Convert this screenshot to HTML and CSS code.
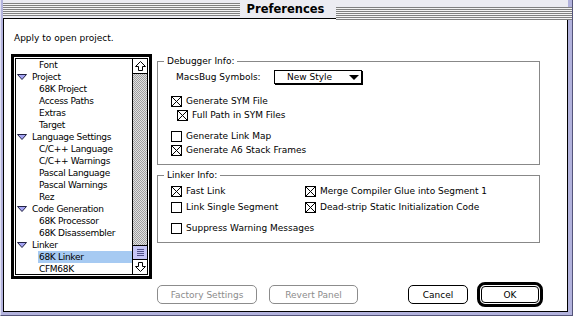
FILE: index.html
```html
<!DOCTYPE html>
<html>
<head>
<meta charset="utf-8">
<title>Preferences</title>
<link rel="stylesheet" href="styles.css">
</head>
<body>
<div class="window">
  <div class="titlebar">
    <div class="stripes left"></div>
    <div class="title">Preferences</div>
    <div class="stripes right"></div>
  </div>
  <div class="content">
    <div class="prompt">Apply to open project.</div>
    <div class="main">
      <div class="listring">
        <div class="list">
          <div class="rows">
            <div class="row child"><span class="lbl">Font</span></div>
            <div class="row parent"><svg class="tri" width="10" height="6" viewBox="0 0 10 6"><path d="M0.5 0.5H9.5L5 5.5Z" fill="#a4a4f4" stroke="#222244" stroke-width="1"/></svg><span class="lbl">Project</span></div>
            <div class="row child"><span class="lbl">68K Project</span></div>
            <div class="row child"><span class="lbl">Access Paths</span></div>
            <div class="row child"><span class="lbl">Extras</span></div>
            <div class="row child"><span class="lbl">Target</span></div>
            <div class="row parent"><svg class="tri" width="10" height="6" viewBox="0 0 10 6"><path d="M0.5 0.5H9.5L5 5.5Z" fill="#a4a4f4" stroke="#222244" stroke-width="1"/></svg><span class="lbl">Language Settings</span></div>
            <div class="row child"><span class="lbl">C/C++ Language</span></div>
            <div class="row child"><span class="lbl">C/C++ Warnings</span></div>
            <div class="row child"><span class="lbl">Pascal Language</span></div>
            <div class="row child"><span class="lbl">Pascal Warnings</span></div>
            <div class="row child"><span class="lbl">Rez</span></div>
            <div class="row parent"><svg class="tri" width="10" height="6" viewBox="0 0 10 6"><path d="M0.5 0.5H9.5L5 5.5Z" fill="#a4a4f4" stroke="#222244" stroke-width="1"/></svg><span class="lbl">Code Generation</span></div>
            <div class="row child"><span class="lbl">68K Processor</span></div>
            <div class="row child"><span class="lbl">68K Disassembler</span></div>
            <div class="row parent"><svg class="tri" width="10" height="6" viewBox="0 0 10 6"><path d="M0.5 0.5H9.5L5 5.5Z" fill="#a4a4f4" stroke="#222244" stroke-width="1"/></svg><span class="lbl">Linker</span></div>
            <div class="row child sel"><span class="lbl">68K Linker</span></div>
            <div class="row child"><span class="lbl">CFM68K</span></div>
          </div>
          <div class="scroll">
            <div class="arrow up"><svg width="11" height="10" viewBox="0 0 11 10"><path d="M5.5 0.5L10.5 5.5H7.5V9.5H3.5V5.5H0.5Z" fill="#fff" stroke="#000"/></svg></div>
            <div class="track"></div>
            <div class="thumb"><span class="grip"></span></div>
            <div class="arrow down"><svg width="11" height="10" viewBox="0 0 11 10"><path d="M5.5 9.5L10.5 4.5H7.5V0.5H3.5V4.5H0.5Z" fill="#fff" stroke="#000"/></svg></div>
          </div>
        </div>
      </div>
      <div class="right">
        <div class="group debugger">
          <span class="legend">Debugger Info:</span>
          <div class="popuprow">
            <span class="plabel">MacsBug Symbols:</span>
            <div class="popup"><span class="ptext">New Style</span><svg width="10" height="5" viewBox="0 0 10 5"><path d="M0 0H10L5 5Z" fill="#000"/></svg></div>
          </div>
          <div class="cb sym"><svg width="11" height="11" viewBox="0 0 11 11"><rect x="0.5" y="0.5" width="10" height="10" fill="#fff" stroke="#000"/><path d="M1 1L10 10M10 1L1 10" stroke="#000"/></svg>Generate SYM File</div>
          <div class="cb full"><svg width="11" height="11" viewBox="0 0 11 11"><rect x="0.5" y="0.5" width="10" height="10" fill="#fff" stroke="#000"/><path d="M1 1L10 10M10 1L1 10" stroke="#000"/></svg>Full Path in SYM Files</div>
          <div class="cb map"><svg width="11" height="11" viewBox="0 0 11 11"><rect x="0.5" y="0.5" width="10" height="10" fill="#fff" stroke="#000"/></svg>Generate Link Map</div>
          <div class="cb a6"><svg width="11" height="11" viewBox="0 0 11 11"><rect x="0.5" y="0.5" width="10" height="10" fill="#fff" stroke="#000"/><path d="M1 1L10 10M10 1L1 10" stroke="#000"/></svg>Generate A6 Stack Frames</div>
        </div>
        <div class="group linker">
          <span class="legend">Linker Info:</span>
          <div class="lgrid">
            <div class="cb"><svg width="11" height="11" viewBox="0 0 11 11"><rect x="0.5" y="0.5" width="10" height="10" fill="#fff" stroke="#000"/><path d="M1 1L10 10M10 1L1 10" stroke="#000"/></svg>Fast Link</div>
            <div class="cb"><svg width="11" height="11" viewBox="0 0 11 11"><rect x="0.5" y="0.5" width="10" height="10" fill="#fff" stroke="#000"/><path d="M1 1L10 10M10 1L1 10" stroke="#000"/></svg>Merge Compiler Glue into Segment 1</div>
            <div class="cb"><svg width="11" height="11" viewBox="0 0 11 11"><rect x="0.5" y="0.5" width="10" height="10" fill="#fff" stroke="#000"/></svg>Link Single Segment</div>
            <div class="cb"><svg width="11" height="11" viewBox="0 0 11 11"><rect x="0.5" y="0.5" width="10" height="10" fill="#fff" stroke="#000"/><path d="M1 1L10 10M10 1L1 10" stroke="#000"/></svg>Dead-strip Static Initialization Code</div>
          </div>
          <div class="cb suppress"><svg width="11" height="11" viewBox="0 0 11 11"><rect x="0.5" y="0.5" width="10" height="10" fill="#fff" stroke="#000"/></svg>Suppress Warning Messages</div>
        </div>
        <div class="buttons">
          <div class="btn dis factory">Factory Settings</div>
          <div class="btn dis revert">Revert Panel</div>
          <div class="btn cancel">Cancel</div>
          <div class="okring"><div class="btn ok">OK</div></div>
        </div>
      </div>
    </div>
  </div>
</div>
</body>
</html>
```

FILE: styles.css
```css
html, body {
  margin: 0;
  padding: 0;
  background: #fff;
  overflow: hidden;
}
body {
  font-family: "DejaVu Sans", "Verdana", sans-serif;
  font-size: 9px;
  line-height: 12px;
  color: #000;
}

.window {
  width: 573px;
  height: 316px;
  box-sizing: border-box;
  background: #b3b3dd;
  border-left: 1px solid #e2e2f4;
  border-right: 1px solid #55557a;
  border-bottom: 1px solid #55557a;
  padding: 0 4px 3px 2px;
  overflow: hidden;
}

.titlebar {
  width: 565px;
  height: 18px;
  display: grid;
  grid-template-columns: 237px 91px 236px;
  background: #ececf2;
}
.stripes {
  height: 13px;
  margin-top: 3px;
  background-color: #f4f4f4;
  background-image: repeating-linear-gradient(to bottom, #808080 0px, #808080 1px, #f4f4f4 1px, #f4f4f4 2px);
}
.title {
  font-weight: bold;
  font-size: 11.5px;
  line-height: 17px;
  padding-top: 1px;
  text-align: center;
  white-space: nowrap;
  overflow: hidden;
}

.content {
  width: 565px;
  height: 294px;
  box-sizing: border-box;
  border: 1px solid #000;
  background: #fff;
  overflow: hidden;
}

.prompt {
  margin: 13px 0 0 10px;
  height: 12px;
}

.main {
  display: flex;
  align-items: flex-start;
  margin-top: 10px;
  padding-left: 7px;
}

.listring {
  flex: none;
  width: 141px;
  height: 225px;
  box-sizing: border-box;
  border: 3px solid #000;
  padding: 1px;
}
.list {
  height: 100%;
  box-sizing: border-box;
  border: 1px solid #000;
  display: flex;
  overflow: hidden;
}
.rows {
  flex: 1;
  min-width: 0;
  overflow: hidden;
  letter-spacing: -0.3px;
}
.row {
  height: 12px;
  line-height: 12px;
  display: flex;
  align-items: center;
  white-space: nowrap;
}
.row.child {
  padding-left: 22px;
}
.row.child .lbl {
  padding-left: 1px;
}
.row.parent {
  padding-left: 1px;
}
.row .lbl {
  flex: 1;
  min-width: 0;
  height: 12px;
  overflow: hidden;
}
.tri {
  flex: none;
  margin-right: 5px;
}
.row.sel .lbl {
  background: #a6caf2;
}

.scroll {
  flex: none;
  width: 15px;
  box-sizing: border-box;
  border-left: 1px solid #000;
  display: flex;
  flex-direction: column;
}
.arrow {
  flex: none;
  height: 15px;
  box-sizing: border-box;
  background: #fff;
  display: flex;
  align-items: center;
  justify-content: center;
}
.arrow.up {
  border-bottom: 1px solid #000;
}
.arrow.down {
  border-top: 1px solid #000;
}
.track {
  flex: 1;
  background: repeating-conic-gradient(#a0a0a0 0 25%, #e2e2e2 0 50%) 0 0 / 2px 2px;
}
.thumb {
  flex: none;
  height: 14px;
  box-sizing: border-box;
  border-top: 1px solid #000;
  background: #c6c6f6;
  display: flex;
  align-items: center;
  justify-content: center;
}
.grip {
  width: 7px;
  height: 7px;
  background: repeating-linear-gradient(to bottom, #505088 0 1px, transparent 1px 2px);
}

.right {
  flex: none;
  width: 386px;
  margin: 7px 0 0 5px;
}
.group {
  position: relative;
  width: 383px;
  box-sizing: border-box;
  border: 1px solid #888;
}
.group.debugger {
  height: 104px;
}
.group.linker {
  height: 68px;
  margin-top: 10px;
}
.legend {
  position: absolute;
  left: 6px;
  top: -7px;
  background: #fff;
  padding: 0 3px;
  line-height: 12px;
  white-space: nowrap;
}

.popuprow {
  display: flex;
  align-items: flex-start;
  height: 15px;
  margin-top: 8px;
}
.plabel {
  flex: none;
  width: 98px;
  margin-left: 18px;
  line-height: 14px;
  white-space: nowrap;
}
.popup {
  flex: none;
  width: 88px;
  height: 14px;
  box-sizing: border-box;
  border: 1px solid #000;
  box-shadow: 1px 1px 0 #000;
  display: flex;
  align-items: center;
}
.ptext {
  margin-left: 12px;
  line-height: 12px;
  white-space: nowrap;
}
.popup svg {
  margin-left: auto;
  margin-right: 2px;
}

.cb {
  display: flex;
  align-items: center;
  height: 11px;
  line-height: 11px;
  white-space: nowrap;
}
.cb svg {
  flex: none;
  margin-right: 4px;
}
.cb.sym {
  margin: 11px 0 0 13px;
}
.cb.full {
  margin: 3px 0 0 19px;
}
.cb.map {
  margin: 10px 0 0 13px;
}
.cb.a6 {
  margin: 3px 0 0 13px;
}

.lgrid {
  display: grid;
  grid-template-columns: 134px auto;
  row-gap: 5px;
  margin: 10px 0 0 13px;
}
.cb.suppress {
  margin: 10px 0 0 13px;
}

.buttons {
  display: flex;
  align-items: center;
  height: 25px;
  margin-top: 39px;
}
.btn {
  flex: none;
  box-sizing: border-box;
  height: 19px;
  border: 1px solid #000;
  border-radius: 5px;
  background: #fff;
  display: flex;
  align-items: center;
  justify-content: center;
  white-space: nowrap;
  padding-top: 1px;
}
.btn.dis {
  border-color: #8c8c8c;
  color: #8c8c8c;
}
.btn.factory {
  width: 100px;
}
.btn.revert {
  width: 89px;
  margin-left: 12px;
}
.btn.cancel {
  width: 60px;
  margin-left: 50px;
}
.okring {
  flex: none;
  width: 66px;
  height: 25px;
  box-sizing: border-box;
  border: 3px solid #000;
  border-radius: 8px;
  padding: 1px;
  margin-left: 9px;
}
.btn.ok {
  width: 100%;
  height: 100%;
  border-radius: 4px;
}
```
